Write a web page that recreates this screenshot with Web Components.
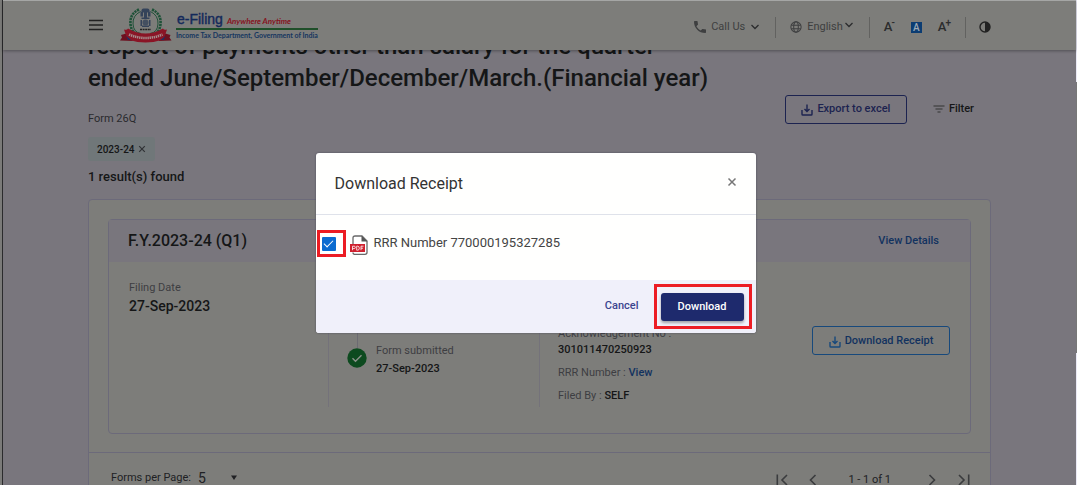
<!DOCTYPE html>
<html lang="en">
<head>
<meta charset="utf-8">
<title>e-Filing - Download Receipt</title>
<style>
html,body{margin:0;height:100%}
body{font-family:Roboto,"Liberation Sans",sans-serif;overflow:hidden;
--paper:#7d7d7a;--lav:#79767d;--line:#6c6a7a;--ink:#151617;--muted:#3d3e42;--navy:#1c2350;--blue:#12325f}
</style>
</head>
<body>
<filing-app></filing-app>
<script>
const define = (name, html) => {
  const t = document.createElement('template');
  t.innerHTML = html;
  customElements.define(name, class extends HTMLElement {
    constructor() {
      super();
      this.attachShadow({mode: 'open'}).append(t.content.cloneNode(true));
    }
  });
};

const icons = {
  menu: ['0 0 16 12', '<path d="M1 1.500h14M1 6h14M1 10.500h14" stroke="currentColor" stroke-width="1.600"/>'],
  phone: ['3 3 18 18', '<path fill="currentColor" d="M20 15.500c-1.200 0-2.400-.2-3.600-.6-.3-.1-.7 0-1 .2l-2.200 2.200c-2.800-1.400-5.100-3.800-6.600-6.600l2.200-2.200c.3-.3.4-.7.2-1-.3-1.100-.5-2.300-.5-3.500 0-.6-.4-1-1-1H4c-.6 0-1 .4-1 1 0 9.400 7.600 17 17 17 .6 0 1-.4 1-1v-3.500c0-.6-.4-1-1-1z"/>'],
  down: ['0 0 10 6', '<path d="M1.500 1 5 4.500 8.500 1" stroke="currentColor" stroke-width="1.300"/>'],
  globe: ['0 0 14 14', '<g stroke="currentColor" stroke-width="1.200"><circle cx="7" cy="7" r="6"/><ellipse cx="7" cy="7" rx="2.700" ry="6"/><path d="M1.500 5h11M1.500 9h11"/></g>'],
  contrast: ['0 0 12 12', '<circle cx="6" cy="6" r="5" stroke="currentColor" stroke-width="1.400"/><path d="M6 1a5 5 0 0 1 0 10z" fill="currentColor"/>'],
  tray: ['0 0 12 12', '<path d="M1 6v4.200q0 .8.8.8h8.400q.8 0 .8-.8V6M6 .5v7M3.500 5 6 7.500 8.500 5" stroke="currentColor" stroke-width="1.400"/>'],
  filter: ['0 0 12 8', '<path d="M.5 1h11M2.500 4h7M4.500 7h3" stroke="currentColor" stroke-width="1.200"/>'],
  close: ['0 0 10 10', '<path d="m1.500 1.500 7 7m0-7-7 7" stroke="currentColor" stroke-width="1.500"/>'],
  prev: ['0 0 12 12', '<path d="M8.500 1 3.500 6l5 5" stroke="currentColor" stroke-width="1.600"/>'],
  next: ['0 0 12 12', '<path d="m3.500 1 5 5-5 5" stroke="currentColor" stroke-width="1.600"/>'],
  first: ['0 0 12 12', '<path d="M1.300.5v11M11 1 6 6l5 5" stroke="currentColor" stroke-width="1.600"/>'],
  last: ['0 0 12 12', '<path d="M10.700.5v11M1 1l5 5-5 5" stroke="currentColor" stroke-width="1.600"/>'],
  done: ['0 0 20 20', '<circle cx="10" cy="10" r="9.700" fill="#0d4a1f"/><path d="m5.500 10.300 3 3 6-6" stroke="#8b918a" stroke-width="1.400"/>'],
  caret: ['0 0 6 5', '<path d="M0 .5h6L3 5z" fill="currentColor"/>'],
  pdf: ['0 0 18 20', '<path d="M3 9V3q0-2 2-2h7l5 5v11.500q0 1.800-2 1.800H4.500Q3 19.300 3 17.500" fill="#fff" stroke="#686868" stroke-width="1.300"/><path d="M11.500.8V6.500h5.800z" fill="#555"/><rect y="9" width="15" height="8" fill="#d0202e"/><path d="M2.500 15.200v-4h1.800q1 0 1 1.200t-1 1.200H2.500M6.700 11.200v4h1q1.600 0 1.600-2t-1.600-2zM11 15.200v-4h2.500M11 13.200h2" stroke="#fff" stroke-width=".8"/>'],
  emblem: ['0 0 52 36', `
    <g stroke="#1f5238"><path d="M19 2.500Q9.500 7 10.500 17t9 11M32 2.500Q41.500 7 40.500 17t-9 11" stroke-width="2.600" stroke-dasharray="2.200 .8"/><path d="M20.500 4.500Q12.500 8.500 13 17t8 9.500M30.500 4.500Q38.500 8.500 38 17t-8 9.500" stroke-width="1"/></g>
    <g fill="#34435a"><rect x="21.500" y="1.500" width="8" height="4" rx="2"/><path d="M20.500 4.500h2.500v5h-2.500zM24 4h3v7h-3zM28 4.500h2.500v5H28z"/><path d="M21.500 10.500h8v1.500h-8z"/><circle cx="25.500" cy="15.500" r="3" opacity=".8"/><path d="M20.500 13h1.500v6h-1.500zM29 13h1.500v6H29zM22 18.500h7v1.500h-7z"/></g>
    <path d="M20 22.500h11" stroke="#222" stroke-width="1.600" stroke-dasharray="2 .6"/>
    <path d="m0 33.500 2-3-1-2.500 7-2L13 34zM51.500 33.500l-2-3 1-2.500-7-2L38.500 34z" fill="#6c1120"/>
    <path d="M4 22.500q3 1 4-1 17.500 10 35 0 1 2 4 1l-3.500 10q-18 6-36 0z" fill="#8a1526"/>
    <path d="m8 33-2-4 5 4zM43.500 33l2-4-5 4z" fill="#1b2f66"/>
    <path d="M9 27.500q16.500 7 33.500 0" stroke="#a58d8d" stroke-width="2.600" stroke-dasharray="1.400 .7"/>`]
};
customElements.define('ui-icon', class extends HTMLElement {
  constructor() { super(); this.attachShadow({mode: 'open'}); }
  connectedCallback() {
    const [box, body] = icons[this.getAttribute('name')];
    this.shadowRoot.innerHTML = `<style>:host{display:inline-block;flex:none;width:12px;height:12px}svg{display:block;width:100%;height:100%}</style><svg viewBox="${box}" fill="none" aria-hidden="true">${body}</svg>`;
  }
});

define('brand-logo', `
<style>
:host{display:flex;gap:4px;align-items:flex-start}
ui-icon{width:52px;height:36px}
.words{padding-top:4px;white-space:nowrap}
.top{display:flex;align-items:baseline;gap:4px;padding:0 1px;border-bottom:2px solid #1f4f2a;height:17px}
b{font:400 14px/17px "Liberation Sans",sans-serif;color:#14295a;-webkit-text-stroke:.4px}
i{font:italic 700 8px/12px Lato,sans-serif;color:#86131f}
small{display:block;font:700 7px/10px Lato,sans-serif;color:#15365f}
</style>
<ui-icon name="emblem"></ui-icon>
<div class="words"><div class="top"><b>e-Filing</b><i>Anywhere Anytime</i></div><small>Income Tax Department, Government of India</small></div>`);

define('site-header', `
<style>
:host{display:flex;align-items:center;height:49px;padding:0 85px 0 85px;background:var(--paper);position:relative;z-index:1;box-shadow:0 1px 3px #0005;color:#3e3f40;border-top:1px solid #a5a6a5}
button{all:unset;display:flex;align-items:center;font-size:12px;line-height:16px}
.menu{width:16px;margin-right:16px;margin-top:-2px}.menu ui-icon{width:16px;height:12px;color:#222}
brand-logo{margin-top:-1px}
.tools{margin-left:auto;display:flex;align-items:center;margin-top:3px}
.call,.lang{gap:5px;font-size:11px}
.d{width:10px;height:6px;color:#2b2c2d}.lang .d{margin:-4px 0 0 -4px}
.sep{width:1px;height:21px;background:#626260;margin:0 14px 0 15px}
.globe{width:12px;height:12px}
.size{font-size:13px;font-weight:500;color:#2b2c2d}
.size sup{font-size:10px;line-height:8px;align-self:flex-start;margin-left:-1px}
.on{background:#0b3c72;color:#9da9b5;width:11px;height:11px;justify-content:center;font-size:10px;line-height:11px;margin:0 16px}
.sep.last{margin:0 13px 0 14px}
.c ui-icon{color:#222}
</style>
<button class="menu" aria-label="Menu"><ui-icon name="menu"></ui-icon></button>
<brand-logo></brand-logo>
<div class="tools">
<button class="call"><ui-icon name="phone"></ui-icon>Call Us<ui-icon class="d" name="down"></ui-icon></button><span class="sep"></span>
<button class="lang"><ui-icon class="globe" name="globe"></ui-icon>English<ui-icon class="d" name="down"></ui-icon></button><span class="sep"></span>
<button class="size">A<sup>-</sup></button><button class="size on">A</button><button class="size">A<sup>+</sup></button><span class="sep last"></span>
<button class="c" aria-label="Contrast"><ui-icon name="contrast"></ui-icon></button>
</div>`);

define('outline-button', `
<style>
:host{display:block;color:var(--c)}
button{all:unset;box-sizing:border-box;display:flex;align-items:center;justify-content:center;gap:4px;width:100%;height:29px;border:1px solid;border-radius:3px;font-weight:500;font-size:11px;line-height:16px;white-space:nowrap}
ui-icon{margin-top:2px}
</style><button><ui-icon name="tray"></ui-icon><slot></slot></button>`);

define('results-head', `
<style>
:host{display:block}
h1{margin:-20px 0 0;font-size:24px;line-height:32px;font-weight:500;color:var(--ink);max-width:628px}
.row{display:flex;justify-content:space-between}
.actions{display:flex;align-items:center;gap:26px;margin-top:1px;height:28px;padding-right:17px}
outline-button{width:122px;--c:var(--navy)}
.filter{all:unset;display:flex;align-items:center;gap:4px;font-size:11px;line-height:16px;font-weight:500;color:var(--ink)}
.filter ui-icon{height:8px;color:#333}
p{margin:17px 0 0;font-size:11px;line-height:16px;color:#292a2d}
.chip{display:inline-flex;align-items:center;gap:3px;height:24px;padding:0 9px;margin-top:10px;background:#707779;border-radius:3px;font-size:10px;font-weight:500;color:var(--ink)}
.chip button{all:unset;display:flex}.chip ui-icon{width:8px;height:8px;color:#303235}
h2{margin:8px 0 14px;font-size:13px;line-height:16px;font-weight:500;color:var(--ink)}
</style>
<h1>respect of payments other than salary for the quarter ended June/September/December/March.(Financial year)</h1>
<div class="row"><div><p>Form 26Q</p><span class="chip">2023-24<button aria-label="Remove"><ui-icon name="close"></ui-icon></button></span><h2>1 result(s) found</h2></div>
<div class="actions"><outline-button>Export to excel</outline-button><button class="filter"><ui-icon name="filter"></ui-icon>Filter</button></div></div>`);

define('filing-card', `
<style>
:host{display:block;border:1px solid var(--line);border-radius:4px;color:var(--muted);font-size:11px;line-height:16px}
header{display:flex;justify-content:space-between;align-items:center;height:42px;padding:0 31px 0 19px;background:var(--lav)}
h3{margin:0;font-size:16px;line-height:20px;font-weight:500;color:var(--ink)}
a{font-weight:500;color:var(--blue);text-decoration:none}
b{font-weight:500;color:var(--ink)}
.body{display:grid;grid-template-columns:219px 211px 1fr auto;height:171px}
.date{padding:18px 20px}.date b{display:block;font-size:14px;line-height:20px}
.col{border-left:1px solid #74727a;box-sizing:border-box;height:145px}
.time{display:grid;grid-template-columns:20px 1fr;column-gap:9px;padding-left:18px;align-content:start}
.stem{width:1px;height:86px;background:#6c6b72;justify-self:center}
.time ui-icon{width:20px;height:20px;grid-column:1}
.step{margin-top:-6px;line-height:18px}.step b{display:block}
.info{padding:64px 0 0 18px}
.info div{margin-bottom:7px}.info .ack b{display:block}
.act{padding:64px 20px 0 0}
outline-button{width:138px;--c:#17497c}outline-button span{color:var(--blue)}
</style>
<header><h3><slot name="year"></slot></h3><a href="#details">View Details</a></header>
<div class="body">
<div class="date">Filing Date<b>27-Sep-2023</b></div>
<div class="col time"><span class="stem"></span><span></span><ui-icon name="done"></ui-icon><div class="step">Form submitted<b>27-Sep-2023</b></div></div>
<div class="col info"><div class="ack">Acknowledgement No :<b>301011470250923</b></div><div>RRR Number : <a href="#rrr">View</a></div><div>Filed By : <b>SELF</b></div></div>
<div class="act"><outline-button><span>Download Receipt</span></outline-button></div>
</div>`);

define('page-bar', `
<style>
:host{display:flex;align-items:center;height:52px;padding:0 20px 0 22px;border-top:1px solid var(--line);font-size:11px;line-height:16px;color:#202124}
label{display:flex;align-items:center;gap:7px;margin-top:-3px}
select{appearance:none;border:0;background:none;margin:0;padding:0;width:26px;font:14px/16px Roboto,sans-serif;color:inherit}
label ui-icon{width:6px;height:5px}
nav{margin-left:auto;display:flex;align-items:center;margin-top:2px}
button{all:unset;display:flex;color:#3b3c3e}
.a{margin-right:19px}.b{margin-right:29px}.c{margin:0 20px 0 35px}
</style>
<label>Forms per Page: <select><option>5</option></select><ui-icon name="caret"></ui-icon></label>
<nav><button class="a" aria-label="First"><ui-icon name="first"></ui-icon></button><button class="b" aria-label="Previous"><ui-icon name="prev"></ui-icon></button>1 - 1 of 1<button class="c" aria-label="Next"><ui-icon name="next"></ui-icon></button><button aria-label="Last"><ui-icon name="last"></ui-icon></button></nav>`);

define('receipt-dialog', `
<style>
:host{display:block;width:440px;background:#fffffe;border-radius:3px;overflow:hidden;box-shadow:0 0 2px #445;color:#333}
header{display:flex;justify-content:space-between;align-items:center;height:61px;padding:0 19px;border-bottom:1px solid #dfe2ea}
h2{margin:0;font-size:16px;line-height:20px;font-weight:400}
button{all:unset;font-size:11px;line-height:16px;font-weight:500}
.x{display:flex;color:#777;margin-top:-4px}.x ui-icon{width:10px;height:10px}
.body{display:flex;align-items:flex-start;height:50px;padding:15px 1px 0}
.mark{border:3px solid #ec1c24;box-sizing:border-box}
.tick{width:29px;height:27px;padding:4px 2px 3px}
input{appearance:none;display:block;margin:0;width:14px;height:14px;background:#0b6bd0;border-radius:1px;position:relative}
input::after{content:"";position:absolute;left:4px;top:1px;width:4px;height:8px;border:solid #fff;border-width:0 1px 1px 0;transform:rotate(45deg)}
.body>ui-icon{width:18px;height:20px;margin:5px 6px 0 4px}
label{font-size:13px;line-height:16px;margin-top:5px;color:#444}
footer{display:flex;justify-content:flex-end;align-items:flex-start;gap:15px;height:49px;padding:4px 4px 0;background:#f0f0fa}
.cancel{color:#3b458f;margin-top:14px}
.wrap{width:98px;padding:6px 5px 5px 4px}
.go{display:block;text-align:center;width:100%;line-height:28px;background:#1e2a6d;color:#fff;border-radius:3px;box-shadow:0 2px 3px #0005}
</style>
<header><h2>Download Receipt</h2><button class="x" aria-label="Close"><ui-icon name="close"></ui-icon></button></header>
<div class="body"><span class="mark tick"><input type="checkbox" id="r" checked></span><ui-icon name="pdf"></ui-icon><label for="r">RRR Number 770000195327285</label></div>
<footer><button class="cancel">Cancel</button><span class="mark wrap"><button class="go">Download</button></span></footer>`);

define('filing-app', `
<style>
:host{display:flex;height:100vh;overflow:hidden;position:relative}
.edge{width:2px;background:#7b7b79;border-right:1px solid #2b2b2d}
.page{flex:1;min-width:0;background:var(--lav)}
.scroll{width:1px;background:linear-gradient(#e9e9f5 82px,#777 82px 353px,#e9e9f5 353px)}
main{padding:0 85px}
.sheet{background:var(--paper);border:1px solid var(--line);border-radius:4px;height:400px}
filing-card{margin:19px 19px 18px}
.overlay{position:absolute;inset:0 6px 0 0;padding-top:1px;display:flex;align-items:center;justify-content:center;z-index:2}
</style>
<div class="edge"></div>
<div class="page"><site-header></site-header>
<main><results-head></results-head>
<section class="sheet"><filing-card><span slot="year">F.Y.2023-24 (Q1)</span></filing-card><page-bar></page-bar></section></main></div>
<div class="scroll"></div>
<div class="overlay"><receipt-dialog role="dialog" aria-label="Download Receipt"></receipt-dialog></div>`);
</script>
</body>
</html>
